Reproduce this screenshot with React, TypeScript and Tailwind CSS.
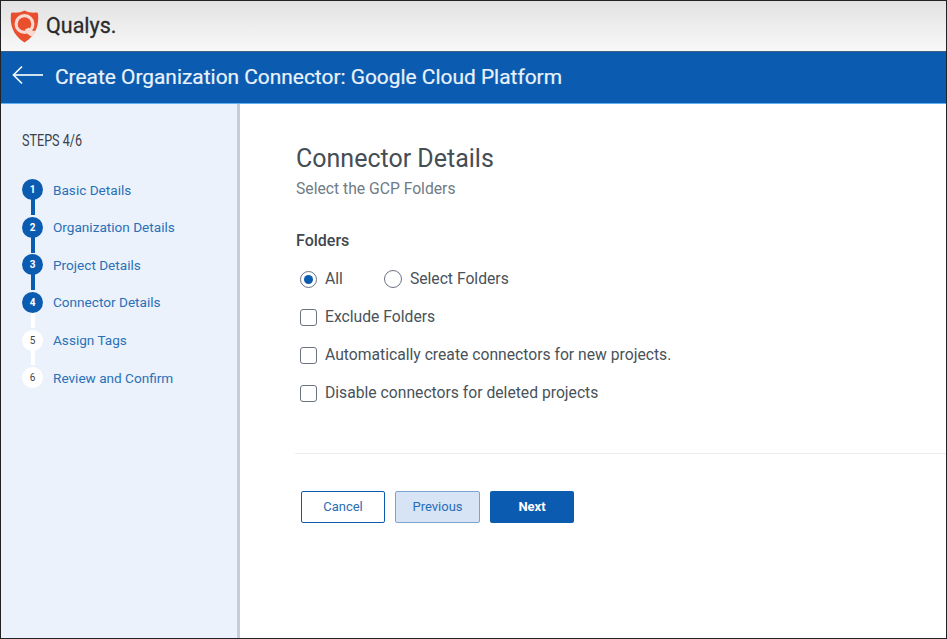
import React from 'react';

const steps = ['Basic Details', 'Organization Details', 'Project Details', 'Connector Details', 'Assign Tags', 'Review and Confirm'];
const current = 4;

const QualysLogo = () => (
  <svg width="29" height="33" viewBox="0 0 29 33">
    <path d="M14.5 0.5C18 2.2 22 3 26 2.6C27.5 2.5 28 3 28.1 4.5C28.8 14 27 24.5 14.5 32.5C2 24.5 0.2 14 0.9 4.5C1 3 1.5 2.5 3 2.6C7 3 11 2.2 14.5 0.5Z" fill="#ea4f2d" />
    <circle cx="14.5" cy="14" r="10" fill="#f6d9d0" />
    <circle cx="14.5" cy="14" r="6.8" fill="#ea4f2d" />
    <path d="M15 19.5C16 23 19 26 23 26.5L25.5 21C22 21 20 19.5 19 17.5Z" fill="#f6d9d0" />
  </svg>
);

const BackArrow = () => (
  <svg width="32" height="20" viewBox="0 0 32 20" fill="none" stroke="#f4f8fd" strokeWidth="1.7" className="ml-[11px] -translate-y-[3px]">
    <path d="M1.5 10H31" />
    <path d="M10 1.5L1.5 10L10 18.5" />
  </svg>
);

const Checkbox = ({ label }: { label: string }) => (
  <label className="flex items-center h-[38px]">
    <span className="w-[17px] h-[17px] rounded-[3px] border border-[#6b7280] bg-white" />
    <span className="ml-[8px] text-[15.7px] text-[#495259]">{label}</span>
  </label>
);

const App: React.FC = () => {
  return (
    <div className="w-[947px] h-[639px] flex flex-col overflow-hidden bg-white border border-[#222] font-['Roboto',sans-serif]">
      <header className="h-[51px] shrink-0 flex items-center pl-[9px] bg-gradient-to-b from-[#e2e2e2] to-[#f8f8f8] border-b border-[#3f5f80]">
        <QualysLogo />
        <span className="ml-[7px] text-[21.5px] text-[#2b2b2b] [-webkit-text-stroke:0.3px_#2b2b2b]">Qualys.</span>
      </header>

      <div className="h-[52px] shrink-0 flex items-center bg-[#0b5cb0] border-b border-[#5fb0f2]">
        <BackArrow />
        <h1 className="ml-[11px] text-[20.9px] text-[#eaf2fb] [-webkit-text-stroke:0.2px_#eaf2fb]">Create Organization Connector: Google Cloud Platform</h1>
      </div>

      <div className="flex flex-1 min-h-0">
        <aside className="w-[239px] shrink-0 bg-[#ebf2fb] border-r-[3px] border-[#c5cdd8] pl-[21px] pt-[26px]">
          <div className="text-[17px] leading-[20px] text-[#3a4149] scale-x-[0.74] origin-left whitespace-nowrap">STEPS 4/6</div>
          <ol className="mt-[21px] flex flex-col">
            {steps.map((s, i) => {
              const done = i + 1 <= current;
              return (
                <li key={s} className="relative flex items-center h-[37.6px]">
                  {i < steps.length - 1 && (
                    <span className={`absolute left-[9px] top-[24px] w-[3.5px] h-[20px] ${i + 1 < current ? 'bg-[#0b5cb0]' : 'bg-white'}`} />
                  )}
                  <span className={`relative w-[21px] h-[21px] rounded-full flex items-center justify-center text-[10px] ${done ? 'bg-[#0b5cb0] text-white font-bold' : 'bg-white text-[#444]'}`}>
                    {i + 1}
                  </span>
                  <span className="ml-[10px] text-[13.6px] text-[#2a70b8]">{s}</span>
                </li>
              );
            })}
          </ol>
        </aside>

        <main className="flex-1 min-w-0 pt-[39px]">
          <div className="pl-[56px]">
            <h2 className="text-[25px] leading-[32px] text-[#454d55]">Connector Details</h2>
            <p className="mt-[4px] text-[15.7px] leading-[20px] text-[#6f7b85]">Select the GCP Folders</p>
            <h3 className="mt-[32px] text-[16px] leading-[20px] font-medium text-[#3f474e]">Folders</h3>
            <div className="mt-[9px] pl-[4px]">
              <div className="flex items-center h-[38px]">
                <span className="w-[17px] h-[17px] rounded-full border border-[#6b7280] flex items-center justify-center">
                  <span className="w-[9px] h-[9px] rounded-full bg-[#0b5cb0]" />
                </span>
                <span className="ml-[8px] text-[15.7px] text-[#495259]">All</span>
                <span className="ml-[41px] w-[18px] h-[18px] rounded-full border border-[#6b7280]" />
                <span className="ml-[8px] text-[15.7px] text-[#495259]">Select Folders</span>
              </div>
              <Checkbox label="Exclude Folders" />
              <Checkbox label="Automatically create connectors for new projects." />
              <Checkbox label="Disable connectors for deleted projects" />
            </div>
          </div>
          <div className="mt-[41px] ml-[55px] h-px bg-[#ececec]" />
          <div className="mt-[37px] ml-[61px] flex gap-[10px] text-[13px]">
            <button className="w-[84px] h-[32px] rounded-[2px] border border-[#0b5cb0] bg-white text-[#2a6db5]">Cancel</button>
            <button className="w-[85px] h-[32px] rounded-[2px] border border-[#7fa3cf] bg-[#d6e4f5] text-[#2a6db5]">Previous</button>
            <button className="w-[84px] h-[32px] rounded-[2px] bg-[#0b5cb0] text-white font-bold">Next</button>
          </div>
        </main>
      </div>
    </div>
  );
};

export default App;
